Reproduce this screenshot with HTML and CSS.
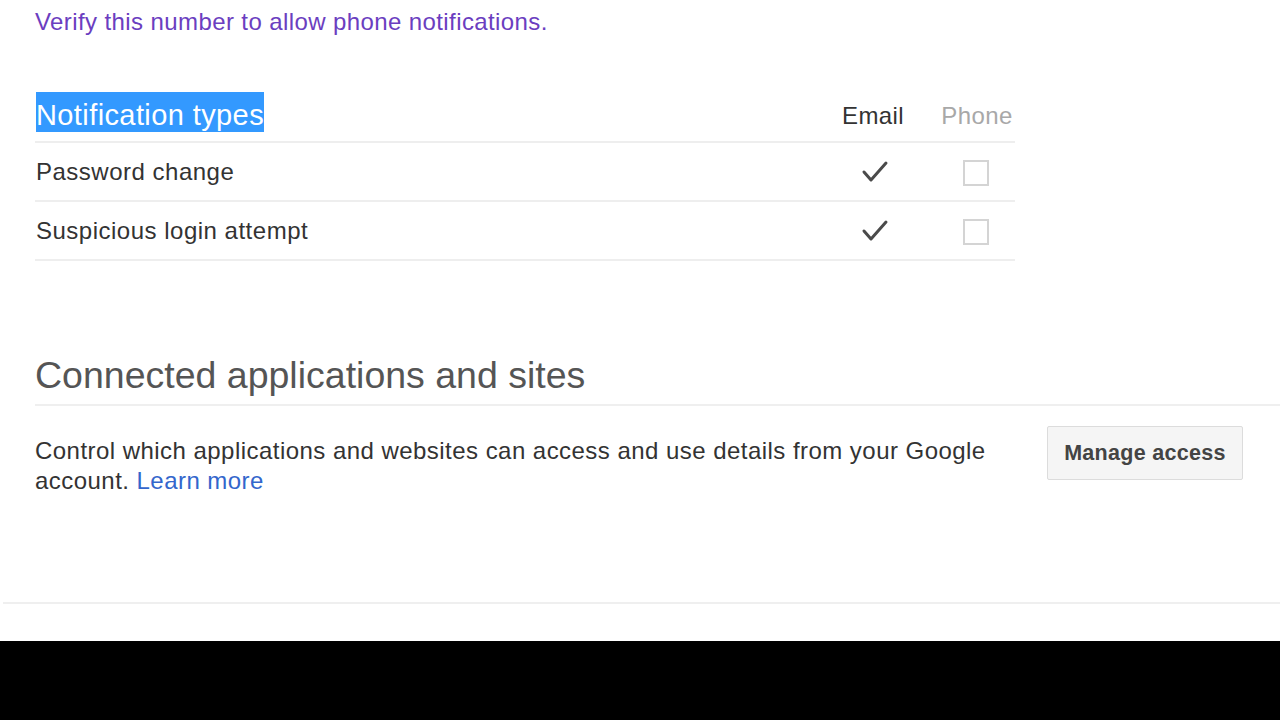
FILE: index.html
```html
<!DOCTYPE html>
<html>
<head>
<meta charset="utf-8">
<link rel="stylesheet" href="styles.css">
</head>
<body>
<div class="page">
  <div class="content">
    <p class="verify">Verify this number to allow phone notifications.</p>
    <div class="types">
      <div class="row head">
        <div class="label"><span class="sel">Notification types</span></div>
        <div class="col email">Email</div>
        <div class="col phone">Phone</div>
      </div>
      <div class="row">
        <div class="label">Password change</div>
        <div class="col"><svg class="check" width="28" height="24" viewBox="0 0 28 24"><path d="M3 12 L10 20 L25 3" fill="none" stroke="#4a4a4a" stroke-width="3" stroke-linecap="round" stroke-linejoin="round"/></svg></div>
        <div class="col"><span class="box"></span></div>
      </div>
      <div class="row">
        <div class="label">Suspicious login attempt</div>
        <div class="col"><svg class="check" width="28" height="24" viewBox="0 0 28 24"><path d="M3 12 L10 20 L25 3" fill="none" stroke="#4a4a4a" stroke-width="3" stroke-linecap="round" stroke-linejoin="round"/></svg></div>
        <div class="col"><span class="box"></span></div>
      </div>
    </div>
    <h2 class="section-title">Connected applications and sites</h2>
    <div class="connected">
      <p class="desc">Control which applications and websites can access and use details from your Google account. <a class="link" href="#">Learn more</a></p>
      <button class="btn">Manage access</button>
    </div>
  </div>
  <div class="footer-line"></div>
</div>
</body>
</html>
```

FILE: styles.css
```css
html, body {
  margin: 0;
  padding: 0;
}
body {
  background: #000;
  font-family: "Liberation Sans", Arial, sans-serif;
  color: #333;
}
.page {
  background: #fff;
  height: 641px;
  overflow: hidden;
}
.content {
  padding-left: 35px;
}
.verify {
  margin: 0;
  padding-top: 7px;
  font-size: 24px;
  line-height: 30px;
  letter-spacing: 0.4px;
  color: #6b3ec0;
}
.types {
  width: 980px;
  margin-top: 49px;
}
.row {
  display: grid;
  grid-template-columns: 1fr 132px 76px;
  align-items: center;
  height: 57px;
  border-bottom: 2px solid #eeeeee;
  font-size: 24px;
  letter-spacing: 0.5px;
  color: #333;
}
.row.head {
  height: 51px;
  padding-top: 4px;
  letter-spacing: 0.4px;
}
.label {
  padding-left: 1px;
}
.sel {
  font-size: 29px;
  background: #3399ff;
  color: #fff;
  padding: 7px 0 1px;
  letter-spacing: 0.4px;
}
.col {
  display: flex;
  justify-content: center;
  align-items: center;
}
.email {
  color: #333;
}
.phone {
  color: #a8a8a8;
}
.check {
  display: block;
  margin-left: 4px;
}
.box {
  display: block;
  width: 22px;
  height: 22px;
  border: 2px solid #d4d4d4;
  margin-top: 3px;
  margin-left: -2px;
}
.section-title {
  margin: 92px 0 0;
  font-weight: normal;
  font-size: 37.5px;
  line-height: 44px;
  color: #555;
  padding-bottom: 7px;
  border-bottom: 2px solid #efefef;
}
.connected {
  display: flex;
  align-items: flex-start;
  margin-top: 20px;
  padding-right: 37px;
}
.desc {
  flex: 1;
  margin: 10px 40px 0 0;
  font-size: 24px;
  line-height: 30px;
  letter-spacing: 0.46px;
  color: #333;
}
.link {
  color: #3366cc;
  text-decoration: none;
}
.btn {
  width: 196px;
  height: 54px;
  background: #f5f5f5;
  border: 1px solid #dcdcdc;
  border-radius: 2px;
  font-family: "Liberation Sans", Arial, sans-serif;
  font-weight: bold;
  font-size: 21.5px;
  letter-spacing: 0.3px;
  color: #444;
  padding: 0;
}
.footer-line {
  margin-top: 106px;
  margin-left: 3px;
  border-top: 2px solid #efefef;
}
```
